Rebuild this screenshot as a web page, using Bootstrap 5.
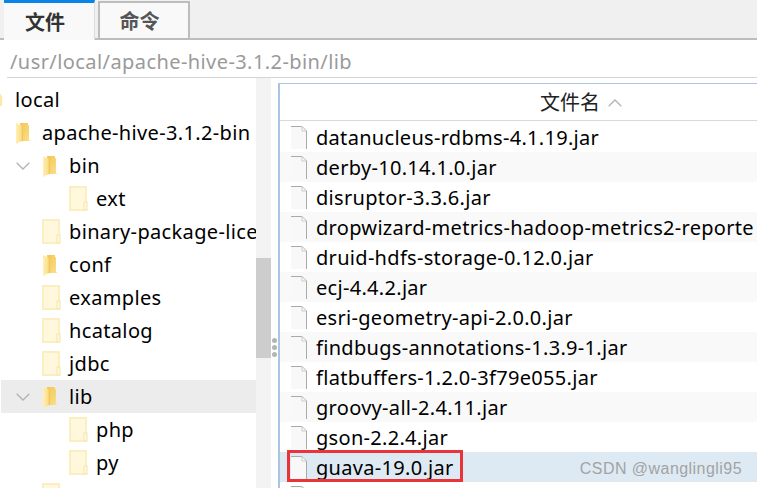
<!DOCTYPE html>
<html lang="zh">
<head>
<meta charset="utf-8">
<title>文件</title>
<link href="https://cdn.jsdelivr.net/npm/bootstrap@5.3.0/dist/css/bootstrap.min.css" rel="stylesheet">
<style>
html,body{height:488px;overflow:hidden;background:#fff;}
body{font-family:"Noto Sans","Noto Sans CJK SC",sans-serif;color:#000;width:757px;position:relative;}
svg{flex:none;}
.tabbar{height:40px;background:#f0f0f0;border-bottom:2px solid #bdbdbd;padding-left:4px;}
.tabitem{font-size:20px;font-weight:700;line-height:1;}
.tabon{width:91px;height:40px;background:#f9f9f9;border-top:3px solid #0a84e8;border-right:1px solid #ddd;color:#333;padding:2px 8px 0 0;margin-right:3px;}
.taboff{width:92px;height:39px;margin-top:1px;background:#f9f9f9;border:2px solid #bdbdbd;color:#555;padding:2px 9px 0 0;}
.pathbar{height:38px;margin-left:7px;border-bottom:1px solid #d5d5d5;padding:4px 0 0 3px;font-size:20px;color:#9a9a9a;line-height:36px;letter-spacing:.42px;}
.mainarea{height:410px;}
.treepane{width:256px;padding-top:5px;overflow:hidden;flex:none;}
.treerow{height:33px;font-size:20px;line-height:33px;letter-spacing:.35px;white-space:nowrap;overflow:hidden;}
.treerow.cur{background:#ececec;margin-left:1px;}
.edgefold{margin-right:12px;}
.rootname{margin-left:11px;}
.gapicon{margin-left:8px;}
.chevslot{margin-left:16px;margin-right:13px;}
.curslot{margin-left:15px;margin-right:13px;}
.foldtop{margin-left:16px;}
.fold2{margin-left:43px;}
.empty2{margin-left:42px;}
.empty3{margin-left:69px;}
.scrolltrack{width:15px;flex:none;background:#f3f3f3;padding-top:180px;}
.scrollthumb{height:100px;background:#cdcdcd;}
.splitter{width:7px;flex:none;padding-top:260px;gap:2px;}
.dotmark{width:5px;height:5px;border-radius:50%;background:#b4b4b4;margin-left:1px;}
.listpane{flex:1;margin-top:5px;border-left:2px solid #a9c5e2;border-top:1px solid #a9c5e2;min-width:0;overflow:hidden;}
.colhead{width:602px;height:37px;border-bottom:1px solid #d9d9d9;font-size:20px;color:#222;margin-bottom:1px;padding-top:2px;}
.filerow{height:30px;font-size:20px;line-height:32px;letter-spacing:.3px;padding-left:11px;white-space:nowrap;overflow:hidden;}
.filerow.alt{background:#f9f9f9;}
.filerow.sel{background:#deeaf3;}
.filerow svg{margin:4px 9px 0 0;}
.stamp{position:absolute;right:15px;top:459px;font-size:16px;line-height:20px;color:#a3a3a3;font-family:"Liberation Sans",sans-serif;letter-spacing:.45px;}
.redbox{position:absolute;left:287px;top:450px;width:176px;height:32px;border:3px solid #ea3439;}
</style>
</head>
<body>
<svg width="0" height="0" class="d-block">
<defs>
<linearGradient id="gb" x1="0" y1="0" x2="1" y2="1"><stop offset="0" stop-color="#f2c655"/><stop offset="1" stop-color="#fbe18f"/></linearGradient>
<linearGradient id="gf" x1="0" y1="0" x2="1" y2="0"><stop offset="0" stop-color="#fff0b4"/><stop offset=".7" stop-color="#fbdf8c"/><stop offset="1" stop-color="#eebf4e"/></linearGradient>
<symbol id="fopen" viewBox="0 0 15 22"><path d="M4 1h8v2l1 .5V18l2 1H6z" fill="url(#gb)"/><path d="M0 1 7 4.500V19L2 20.500V22L0 21z" fill="url(#gf)"/></symbol>
<symbol id="fempty" viewBox="0 0 19 25"><rect x="1" y="1" width="16" height="23" fill="#fff8dd" stroke="#fbeec1" stroke-width="2"/><rect x="15" y="16" width="3" height="8" fill="#fff8dd" stroke="#f6e4aa"/></symbol>
<symbol id="fdoc" viewBox="0 0 16 23"><path d="M0 0H10.500L16 5.500V23H0z" fill="#f8f8f8"/><path d="M0 .5H11L15.500 5V23" fill="none" stroke="#aaa"/><path d="M11 .5V5h4.500z" fill="#fff" stroke="#c9c9c9"/></symbol>
<symbol id="vchev" viewBox="0 0 14 8"><path d="M.7 .7 7 7 13.300 .7" fill="none" stroke="#b3b3b3" stroke-width="1.300"/></symbol>
<symbol id="fedge" viewBox="0 0 4 18"><path d="M0 0 3 5V17H0z" fill="#fde9a8"/></symbol>
</defs>
</svg>

<div class="tabbar d-flex">
  <div class="tabitem tabon d-flex align-items-center justify-content-center">文件</div>
  <div class="tabitem taboff d-flex align-items-center justify-content-center">命令</div>
</div>
<div class="pathbar">/usr/local/apache-hive-3.1.2-bin/lib</div>

<div class="mainarea d-flex">
  <div class="treepane">
    <div class="treerow d-flex align-items-center"><svg class="edgefold" width="3" height="18"><use href="#fedge"/></svg>local</div>
    <div class="treerow d-flex align-items-center"><svg class="foldtop" width="15" height="22"><use href="#fopen"/></svg><span class="rootname">apache-hive-3.1.2-bin</span></div>
    <div class="treerow d-flex align-items-center"><svg width="14" height="8" class="chevslot"><use href="#vchev"/></svg><svg width="15" height="22"><use href="#fopen"/></svg><span class="rootname">bin</span></div>
    <div class="treerow d-flex align-items-center"><svg class="empty3" width="19" height="25"><use href="#fempty"/></svg><span class="gapicon">ext</span></div>
    <div class="treerow d-flex align-items-center"><svg class="empty2" width="19" height="25"><use href="#fempty"/></svg><span class="gapicon">binary-package-lice</span></div>
    <div class="treerow d-flex align-items-center"><svg class="fold2" width="15" height="22"><use href="#fopen"/></svg><span class="rootname">conf</span></div>
    <div class="treerow d-flex align-items-center"><svg class="empty2" width="19" height="25"><use href="#fempty"/></svg><span class="gapicon">examples</span></div>
    <div class="treerow d-flex align-items-center"><svg class="empty2" width="19" height="25"><use href="#fempty"/></svg><span class="gapicon">hcatalog</span></div>
    <div class="treerow d-flex align-items-center"><svg class="empty2" width="19" height="25"><use href="#fempty"/></svg><span class="gapicon">jdbc</span></div>
    <div class="treerow cur d-flex align-items-center"><svg width="14" height="8" class="curslot"><use href="#vchev"/></svg><svg width="15" height="22"><use href="#fopen"/></svg><span class="rootname">lib</span></div>
    <div class="treerow d-flex align-items-center"><svg class="empty3" width="19" height="25"><use href="#fempty"/></svg><span class="gapicon">php</span></div>
    <div class="treerow d-flex align-items-center"><svg class="empty3" width="19" height="25"><use href="#fempty"/></svg><span class="gapicon">py</span></div>
    <div class="treerow d-flex align-items-center"><svg class="empty2" width="19" height="25"><use href="#fempty"/></svg></div>
  </div>
  <div class="scrolltrack"><div class="scrollthumb"></div></div>
  <div class="splitter d-flex flex-column"><div class="dotmark"></div><div class="dotmark"></div><div class="dotmark"></div></div>
  <div class="listpane">
    <div class="colhead d-flex align-items-center justify-content-center">
      <span>文件名</span>
      <svg width="14" height="8" class="ms-2"><path d="M.7 7.300 7 1 13.300 7.300" fill="none" stroke="#b3b3b3" stroke-width="1.300"/></svg>
    </div>
    <div class="filerow d-flex"><svg width="16" height="23"><use href="#fdoc"/></svg>datanucleus-rdbms-4.1.19.jar</div>
    <div class="filerow alt d-flex"><svg width="16" height="23"><use href="#fdoc"/></svg>derby-10.14.1.0.jar</div>
    <div class="filerow d-flex"><svg width="16" height="23"><use href="#fdoc"/></svg>disruptor-3.3.6.jar</div>
    <div class="filerow alt d-flex"><svg width="16" height="23"><use href="#fdoc"/></svg>dropwizard-metrics-hadoop-metrics2-reporte</div>
    <div class="filerow d-flex"><svg width="16" height="23"><use href="#fdoc"/></svg>druid-hdfs-storage-0.12.0.jar</div>
    <div class="filerow alt d-flex"><svg width="16" height="23"><use href="#fdoc"/></svg>ecj-4.4.2.jar</div>
    <div class="filerow d-flex"><svg width="16" height="23"><use href="#fdoc"/></svg>esri-geometry-api-2.0.0.jar</div>
    <div class="filerow alt d-flex"><svg width="16" height="23"><use href="#fdoc"/></svg>findbugs-annotations-1.3.9-1.jar</div>
    <div class="filerow d-flex"><svg width="16" height="23"><use href="#fdoc"/></svg>flatbuffers-1.2.0-3f79e055.jar</div>
    <div class="filerow alt d-flex"><svg width="16" height="23"><use href="#fdoc"/></svg>groovy-all-2.4.11.jar</div>
    <div class="filerow d-flex"><svg width="16" height="23"><use href="#fdoc"/></svg>gson-2.2.4.jar</div>
    <div class="filerow sel d-flex"><svg width="16" height="23"><use href="#fdoc"/></svg>guava-19.0.jar</div>
    <div class="filerow d-flex"><svg width="16" height="23"><use href="#fdoc"/></svg></div>
  </div>
</div>
<div class="redbox"></div>
<div class="stamp">CSDN @wanglingli95</div>
<script src="https://cdn.jsdelivr.net/npm/bootstrap@5.3.0/dist/js/bootstrap.bundle.min.js"></script>
</body>
</html>
